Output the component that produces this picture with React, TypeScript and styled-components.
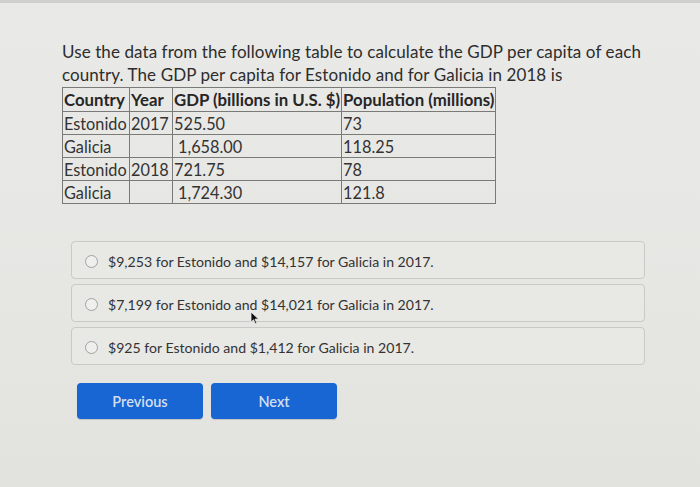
import React from "react";
import styled, { createGlobalStyle } from "styled-components";

const GlobalStyle = createGlobalStyle`
  html, body {
    margin: 0;
    padding: 0;
    background: #e5e5e2;
  }
  body {
    font-family: Lato, "Open Sans", sans-serif;
    color: #2e2e2e;
  }
`;

const Page = styled.div`
  width: 700px;
  height: 487px;
  box-sizing: border-box;
  padding: 37px 0 0 62px;
  background: linear-gradient(180deg, #e9e9e7 0%, #e6e6e3 60%, #e2e2df 100%);
  border-top: 3px solid #cfcfcc;
`;

const Question = styled.p`
  margin: 0;
  width: 600px;
  font-size: 17px;
  line-height: 23px;
  letter-spacing: 0.09px;
  color: #2d2d2d;
`;

const DataTable = styled.table`
  margin-top: 1px;
  border-collapse: collapse;
  border: 1.5px solid #6e6e6c;
  font-size: 16.3px;
  color: #333;
`;

const HeadCell = styled.th<{ $w: number }>`
  width: ${(p) => p.$w}px;
  height: 23px;
  padding: 0 1px;
  border: 1px solid #7a7a78;
  text-align: left;
  font-size: 16.8px;
  font-weight: 700;
  white-space: nowrap;
  color: #262626;
`;

const Cell = styled.td<{ $indent?: number }>`
  height: 22px;
  padding: 0 1px 0 ${(p) => 1 + (p.$indent ?? 0)}px;
  border: 1px solid #7a7a78;
  white-space: nowrap;
`;

const Options = styled.div`
  margin: 37px 0 0 9px;
  width: 574px;
  display: flex;
  flex-direction: column;
  gap: 5px;
  position: relative;
`;

const Option = styled.label`
  height: 38px;
  box-sizing: border-box;
  display: flex;
  align-items: center;
  gap: 10px;
  padding: 2px 0 0 13px;
  border: 1px solid #c9c9c6;
  border-radius: 4px;
  background: #e8e8e5;
  font-size: 14.1px;
  color: #333;
`;

const Radio = styled.span`
  width: 11px;
  height: 11px;
  border-radius: 50%;
  border: 1.5px solid #a2a2a0;
  background: #efefed;
`;

const Cursor = styled.svg`
  position: absolute;
  left: 179px;
  top: 70px;
`;

const Buttons = styled.div`
  margin: 18px 0 0 15px;
  display: flex;
  gap: 8px;
`;

const NavButton = styled.button`
  width: 126px;
  height: 36px;
  border: none;
  border-radius: 4px;
  background: #1766d4;
  color: #d5deef;
  font-family: Lato, sans-serif;
  font-size: 14.5px;
  font-weight: 600;
  box-shadow: 0 1px 1px rgba(0, 0, 0, 0.15);
`;

const rows = [
  { country: "Estonido", year: "2017", gdp: "525.50", pop: "73", gdpIndent: 0 },
  { country: "Galicia", year: "", gdp: "1,658.00", pop: "118.25", gdpIndent: 4 },
  { country: "Estonido", year: "2018", gdp: "721.75", pop: "78", gdpIndent: 0 },
  { country: "Galicia", year: "", gdp: "1,724.30", pop: "121.8", gdpIndent: 4 },
];

const answers = [
  "$9,253 for Estonido and $14,157 for Galicia in 2017.",
  "$7,199 for Estonido and $14,021 for Galicia in 2017.",
  "$925 for Estonido and $1,412 for Galicia in 2017.",
];

export default function App() {
  return (
    <>
      <GlobalStyle />
      <Page>
        <Question>
          Use the data from the following table to calculate the GDP per capita of each
          country. The GDP per capita for Estonido and for Galicia in 2018 is
        </Question>
        <DataTable>
          <thead>
            <tr>
              <HeadCell $w={64}>Country</HeadCell>
              <HeadCell $w={40}>Year</HeadCell>
              <HeadCell $w={166}>GDP (billions in U.S. $)</HeadCell>
              <HeadCell $w={151}>Population (millions)</HeadCell>
            </tr>
          </thead>
          <tbody>
            {rows.map((r, i) => (
              <tr key={i}>
                <Cell>{r.country}</Cell>
                <Cell>{r.year}</Cell>
                <Cell $indent={r.gdpIndent}>{r.gdp}</Cell>
                <Cell>{r.pop}</Cell>
              </tr>
            ))}
          </tbody>
        </DataTable>
        <Options>
          {answers.map((a) => (
            <Option key={a}>
              <Radio />
              {a}
            </Option>
          ))}
          <Cursor width="10" height="14" viewBox="0 0 10 14">
            <path d="M1 1 L1 11 L3.5 8.8 L5.5 13 L7 12.3 L5 8.2 L8.5 8 Z" fill="#111" stroke="#eee" strokeWidth="0.8" />
          </Cursor>
        </Options>
        <Buttons>
          <NavButton>Previous</NavButton>
          <NavButton>Next</NavButton>
        </Buttons>
      </Page>
    </>
  );
}
